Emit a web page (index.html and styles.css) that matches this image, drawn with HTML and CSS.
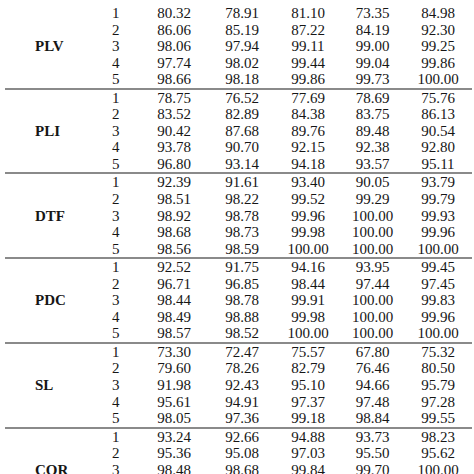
FILE: index.html
```html
<!DOCTYPE html>
<html>
<head>
<meta charset="utf-8">
<link rel="stylesheet" href="styles.css">
</head>
<body>
<div class="table">
  <div class="group">
    <div class="label">PLV</div>
    <div class="idx">1</div><div class="v">80.32</div><div class="v">78.91</div><div class="v">81.10</div><div class="v">73.35</div><div class="v">84.98</div>
    <div class="idx">2</div><div class="v">86.06</div><div class="v">85.19</div><div class="v">87.22</div><div class="v">84.19</div><div class="v">92.30</div>
    <div class="idx">3</div><div class="v">98.06</div><div class="v">97.94</div><div class="v">99.11</div><div class="v">99.00</div><div class="v">99.25</div>
    <div class="idx">4</div><div class="v">97.74</div><div class="v">98.02</div><div class="v">99.44</div><div class="v">99.04</div><div class="v">99.86</div>
    <div class="idx">5</div><div class="v">98.66</div><div class="v">98.18</div><div class="v">99.86</div><div class="v">99.73</div><div class="v">100.00</div>
  </div>
  <div class="group ruled">
    <div class="label">PLI</div>
    <div class="idx">1</div><div class="v">78.75</div><div class="v">76.52</div><div class="v">77.69</div><div class="v">78.69</div><div class="v">75.76</div>
    <div class="idx">2</div><div class="v">83.52</div><div class="v">82.89</div><div class="v">84.38</div><div class="v">83.75</div><div class="v">86.13</div>
    <div class="idx">3</div><div class="v">90.42</div><div class="v">87.68</div><div class="v">89.76</div><div class="v">89.48</div><div class="v">90.54</div>
    <div class="idx">4</div><div class="v">93.78</div><div class="v">90.70</div><div class="v">92.15</div><div class="v">92.38</div><div class="v">92.80</div>
    <div class="idx">5</div><div class="v">96.80</div><div class="v">93.14</div><div class="v">94.18</div><div class="v">93.57</div><div class="v">95.11</div>
  </div>
  <div class="group ruled">
    <div class="label">DTF</div>
    <div class="idx">1</div><div class="v">92.39</div><div class="v">91.61</div><div class="v">93.40</div><div class="v">90.05</div><div class="v">93.79</div>
    <div class="idx">2</div><div class="v">98.51</div><div class="v">98.22</div><div class="v">99.52</div><div class="v">99.29</div><div class="v">99.79</div>
    <div class="idx">3</div><div class="v">98.92</div><div class="v">98.78</div><div class="v">99.96</div><div class="v">100.00</div><div class="v">99.93</div>
    <div class="idx">4</div><div class="v">98.68</div><div class="v">98.73</div><div class="v">99.98</div><div class="v">100.00</div><div class="v">99.96</div>
    <div class="idx">5</div><div class="v">98.56</div><div class="v">98.59</div><div class="v">100.00</div><div class="v">100.00</div><div class="v">100.00</div>
  </div>
  <div class="group ruled">
    <div class="label">PDC</div>
    <div class="idx">1</div><div class="v">92.52</div><div class="v">91.75</div><div class="v">94.16</div><div class="v">93.95</div><div class="v">99.45</div>
    <div class="idx">2</div><div class="v">96.71</div><div class="v">96.85</div><div class="v">98.44</div><div class="v">97.44</div><div class="v">97.45</div>
    <div class="idx">3</div><div class="v">98.44</div><div class="v">98.78</div><div class="v">99.91</div><div class="v">100.00</div><div class="v">99.83</div>
    <div class="idx">4</div><div class="v">98.49</div><div class="v">98.88</div><div class="v">99.98</div><div class="v">100.00</div><div class="v">99.96</div>
    <div class="idx">5</div><div class="v">98.57</div><div class="v">98.52</div><div class="v">100.00</div><div class="v">100.00</div><div class="v">100.00</div>
  </div>
  <div class="group ruled">
    <div class="label">SL</div>
    <div class="idx">1</div><div class="v">73.30</div><div class="v">72.47</div><div class="v">75.57</div><div class="v">67.80</div><div class="v">75.32</div>
    <div class="idx">2</div><div class="v">79.60</div><div class="v">78.26</div><div class="v">82.79</div><div class="v">76.46</div><div class="v">80.50</div>
    <div class="idx">3</div><div class="v">91.98</div><div class="v">92.43</div><div class="v">95.10</div><div class="v">94.66</div><div class="v">95.79</div>
    <div class="idx">4</div><div class="v">95.61</div><div class="v">94.91</div><div class="v">97.37</div><div class="v">97.48</div><div class="v">97.28</div>
    <div class="idx">5</div><div class="v">98.05</div><div class="v">97.36</div><div class="v">99.18</div><div class="v">98.84</div><div class="v">99.55</div>
  </div>
  <div class="group ruled">
    <div class="label">COR</div>
    <div class="idx">1</div><div class="v">93.24</div><div class="v">92.66</div><div class="v">94.88</div><div class="v">93.73</div><div class="v">98.23</div>
    <div class="idx">2</div><div class="v">95.36</div><div class="v">95.08</div><div class="v">97.03</div><div class="v">95.50</div><div class="v">95.62</div>
    <div class="idx">3</div><div class="v">98.48</div><div class="v">98.68</div><div class="v">99.84</div><div class="v">99.70</div><div class="v">100.00</div>
  </div>
</div>
</body>
</html>
```

FILE: styles.css
```css
html, body {
  margin: 0;
  padding: 0;
  background: #ffffff;
  overflow: hidden;
  width: 474px;
  height: 474px;
}

.table {
  padding: 5px 2px 0 5px;
  font-family: "Liberation Serif", "Times New Roman", serif;
  font-size: 15px;
  color: #161616;
}

.group {
  display: grid;
  grid-template-columns: 102px 33px 68px 68px 64px 65px 66px;
  grid-auto-rows: 16.55px;
  line-height: 16.55px;
}

.group.ruled {
  border-top: 2px solid #8a8a8a;
}

.label {
  grid-column: 1;
  grid-row: 3;
  font-weight: bold;
  padding-left: 30px;
}

.idx {
  grid-column: 2;
  padding-left: 5px;
}

.v {
  text-align: center;
}
```
